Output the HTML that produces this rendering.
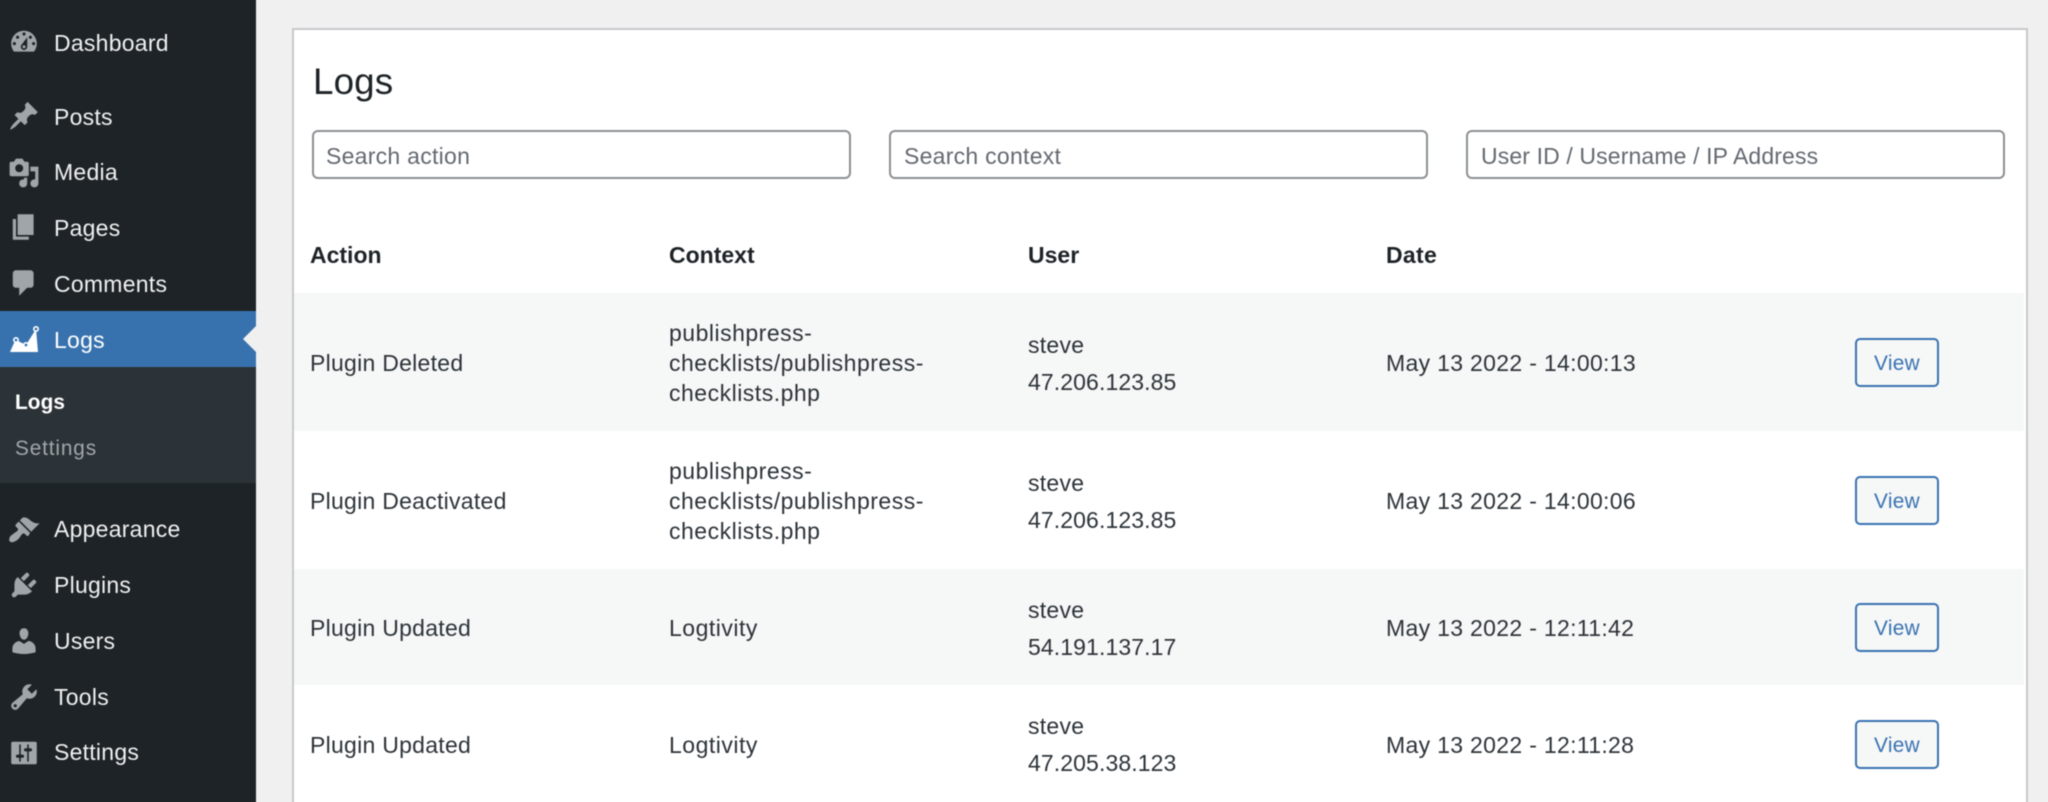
<!DOCTYPE html>
<html lang="en"><head><meta charset="utf-8"><title>Logs</title>
<style>
html,body{margin:0;padding:0;width:2048px;height:802px;overflow:hidden;background:#f0f0f1}
body{position:relative;font-family:"Liberation Sans",sans-serif;color:#2c3338;-webkit-font-smoothing:antialiased}
#w{position:absolute;left:0;top:0;width:2048px;height:802px;filter:blur(.45px)}
.a{position:absolute}
.t{position:absolute;white-space:nowrap;font-size:23px;line-height:30px;letter-spacing:.27px}
.c{letter-spacing:.5px}
.n{letter-spacing:.1px}
.d{letter-spacing:.32px}
.m{left:54px;color:#f0f0f1;letter-spacing:.25px}
.i{position:absolute;left:8px;width:32px;height:32px;fill:#a0a5aa}
.h{font-weight:700;color:#1d2327;letter-spacing:0}
.inp{position:absolute;top:130px;height:45px;box-sizing:content-box;border:2px solid #8c8f94;border-radius:6px;background:#fff}
.ph{position:absolute;top:134px;line-height:44px;font-size:23px;color:#646970;white-space:nowrap;letter-spacing:.27px}
.row{position:absolute;left:294px;width:1730px}
.btn{position:absolute;left:1855px;width:80px;height:45px;border:2px solid #3872b2;border-radius:5px;background:#f6f7f7;color:#3872b2;font-size:20.8px;line-height:47px;text-align:center;letter-spacing:.3px}
</style></head><body><div id="w">
<div class="a" style="left:-6px;top:-6px;width:262px;height:814px;background:#1d2327"></div>
<div class="a" style="left:-6px;top:311px;width:262px;height:56px;background:#3872ae"></div>
<div class="a" style="left:-6px;top:367px;width:262px;height:116px;background:#2c3338"></div>
<div class="a" style="left:243px;top:326px;width:0;height:0;border-top:13px solid transparent;border-bottom:13px solid transparent;border-right:13px solid #f0f0f1"></div>

<svg class="i" style="top:26px" viewBox="0 0 20 20"><path d="M3.76 16h12.48c1.1-1.37 1.76-3.11 1.76-5 0-4.42-3.58-8-8-8s-8 3.58-8 8c0 1.89.66 3.63 1.76 5zM10 4c.55 0 1 .45 1 1s-.45 1-1 1-1-.45-1-1 .45-1 1-1zM6 6c.55 0 1 .45 1 1s-.45 1-1 1-1-.45-1-1 .45-1 1-1zm8 0c.55 0 1 .45 1 1s-.45 1-1 1-1-.45-1-1 .45-1 1-1zm-5.37 5.55L12 7v6c0 1.1-.9 2-2 2s-2-.9-2-2c0-.57.24-1.08.63-1.45zM4 10c.55 0 1 .45 1 1s-.45 1-1 1-1-.45-1-1 .45-1 1-1zm12 0c.55 0 1 .45 1 1s-.45 1-1 1-1-.45-1-1 .45-1 1-1zm-5 3c0-.55-.45-1-1-1s-1 .45-1 1 .45 1 1 1 1-.45 1-1z" fill-rule="evenodd"/></svg>
<div class="t m" style="top:28px">Dashboard</div>
<svg class="i" style="top:100px" viewBox="0 0 20 20"><path d="M10.44 3.02l1.82-1.82 6.36 6.35-1.83 1.82c-1.05-.68-2.48-.57-3.41.36l-.75.75c-.92.93-1.04 2.35-.35 3.41l-1.83 1.82-2.41-2.41-2.8 2.79c-.42.42-3.38 2.71-3.8 2.29s1.86-3.39 2.28-3.81l2.79-2.79L4.1 9.36l1.83-1.82c1.05.69 2.48.57 3.4-.36l.75-.75c.93-.92 1.05-2.35.36-3.41z"/></svg>
<div class="t m" style="top:102px">Posts</div>
<svg class="i" style="top:157px" viewBox="0 0 20 20"><path fill-rule="evenodd" d="M13 11V4c0-.55-.45-1-1-1h-1.67L9 1H5L3.67 3H2c-.55 0-1 .45-1 1v7c0 .55.45 1 1 1h10c.55 0 1-.45 1-1zM7 4.5c1.38 0 2.5 1.12 2.5 2.5S8.38 9.5 7 9.5 4.5 8.38 4.5 7 5.62 4.5 7 4.5z"/><path d="M14 6h5v10.5c0 1.38-1.12 2.5-2.5 2.5S14 17.88 14 16.5s1.12-2.5 2.5-2.5c.17 0 .34.02.5.05V9h-3V6zm-4 8.05V13h2v3.5c0 1.38-1.12 2.5-2.5 2.5S7 17.88 7 16.5 8.12 14 9.5 14c.17 0 .34.02.5.05z"/></svg>
<div class="t m" style="top:157px">Media</div>
<svg class="i" style="top:211px" viewBox="0 0 20 20"><path d="M6 15V2h10v13H6zm-1 1h8v2H3V5h2v11z"/></svg>
<div class="t m" style="top:213px">Pages</div>
<svg class="i" style="top:267px" viewBox="0 0 20 20"><path d="M5 2h9c1.1 0 2 .9 2 2v7c0 1.1-.9 2-2 2h-2l-5 5v-5H5c-1.1 0-2-.9-2-2V4c0-1.1.9-2 2-2z"/></svg>
<div class="t m" style="top:269px">Comments</div>

<svg class="a" style="left:8px;top:323px;width:34px;height:32px" viewBox="0 0 34 32">
<path d="M2 29L6 20L8 17L18 22L28 6L30 29Z" fill="#fff"/>
<circle cx="8" cy="17" r="2.2" fill="#3872ae" stroke="#fff" stroke-width="1.6"/>
<circle cx="18" cy="22" r="2.2" fill="#3872ae" stroke="#fff" stroke-width="1.6"/>
<circle cx="28" cy="6" r="2.2" fill="#3872ae" stroke="#fff" stroke-width="1.6"/>
</svg>
<div class="t m" style="top:325px;color:#fff">Logs</div>
<div class="t" style="left:15px;top:388px;color:#fff;font-weight:700;font-size:20.8px;letter-spacing:.1px">Logs</div>
<div class="t" style="left:15px;top:434px;color:#a2a6aa;font-size:20.8px;letter-spacing:.85px">Settings</div>

<svg class="i" style="top:514px" viewBox="0 0 20 20"><path d="M14.48 11.06L7.41 3.99l1.5-1.5c.5-.56 2.3-.47 3.51.32 1.21.8 1.43 1.28 2.91 2.1 1.18.64 2.45 1.26 4.45.85zm-.71.71L6.7 4.7 4.93 6.47c-.39.39-.39 1.02 0 1.41l1.06 1.06c.39.39.39 1.03 0 1.42-.6.6-1.43 1.11-2.21 1.69-.35.26-.7.53-1.01.84C1.43 13.26 0 16 1.18 17.18c1.17 1.18 3.92-.25 5.31-1.59.31-.31.58-.66.85-1.01.58-.78 1.09-1.61 1.69-2.21.39-.39 1.02-.39 1.41 0l1.06 1.06c.39.39 1.02.39 1.41 0z"/></svg>
<div class="t m" style="top:514px">Appearance</div>
<svg class="i" style="top:569px" viewBox="0 0 20 20"><path d="M13.11 4.36L9.87 7.6 8 5.73l3.24-3.24c.35-.34 1.05-.2 1.56.32.52.51.66 1.21.31 1.55zm-8 1.77l.91-1.12 9.01 9.01-1.19.84c-.71.71-2.63 1.16-3.82 1.16H6.14L4.9 17.26c-.59.59-1.54.59-2.12 0-.59-.58-.59-1.53 0-2.12l1.24-1.24v-3.88c0-1.13.4-3.19 1.09-3.89zm7.26 3.97l3.24-3.24c.34-.35 1.04-.21 1.55.31.52.51.66 1.21.31 1.55l-3.24 3.25z"/></svg>
<div class="t m" style="top:570px">Plugins</div>
<svg class="i" style="top:625px" viewBox="0 0 20 20"><path d="M10 9.25c-2.27 0-2.73-3.44-2.73-3.44C7 4.02 7.82 2 9.97 2c2.16 0 2.98 2.02 2.71 3.81 0 0-.41 3.44-2.68 3.44zm0 2.57L12.72 10c2.39 0 4.52 2.33 4.52 4.53v2.49s-3.65 1.13-7.24 1.13c-3.65 0-7.24-1.13-7.24-1.13v-2.49c0-2.25 1.94-4.48 4.47-4.48z"/></svg>
<div class="t m" style="top:626px">Users</div>
<svg class="i" style="top:681px" viewBox="0 0 20 20"><path fill-rule="evenodd" d="M16.68 9.77c-1.34 1.34-3.3 1.67-4.95.99l-5.41 6.52c-.99.99-2.59.99-3.58 0s-.99-2.59 0-3.57l6.52-5.42c-.68-1.65-.35-3.61.99-4.95 1.28-1.28 3.12-1.62 4.72-1.06l-2.89 2.89 2.82 2.82 2.86-2.87c.53 1.58.18 3.39-1.08 4.65zM3.81 16.21c.4.39 1.04.39 1.43 0 .4-.4.4-1.04 0-1.43-.39-.4-1.03-.4-1.43 0-.39.39-.39 1.03 0 1.43z"/></svg>
<div class="t m" style="top:682px">Tools</div>
<svg class="i" style="top:737px" viewBox="0 0 20 20"><rect x="2" y="3" width="16" height="14" rx="1"/><path d="M7.5 5v10M5.5 12h4M12.5 5v10M10.5 8h4" stroke="#1d2327" stroke-width="1" fill="none" stroke-linecap="round"/><path d="M6 12h3M11 8h3" stroke="#1d2327" stroke-width="2" fill="none" stroke-linecap="round"/></svg>
<div class="t m" style="top:737px">Settings</div>

<div class="a" style="left:292px;top:28px;width:1732px;height:790px;background:#fff;border:2px solid #c8c9cc"></div>
<div class="t" style="left:313px;top:59px;font-size:36.8px;line-height:46px;color:#1d2327;letter-spacing:.1px">Logs</div>

<div class="inp" style="left:312px;width:535px"></div><div class="ph" style="left:326px">Search action</div>
<div class="inp" style="left:889px;width:535px"></div><div class="ph" style="left:904px">Search context</div>
<div class="inp" style="left:1466px;width:535px"></div><div class="ph" style="left:1481px;letter-spacing:.13px">User ID / Username / IP Address</div>

<div class="t h" style="left:310px;top:240px">Action</div>
<div class="t h" style="left:669px;top:240px">Context</div>
<div class="t h" style="left:1028px;top:240px">User</div>
<div class="t h" style="left:1386px;top:240px;letter-spacing:.3px">Date</div>

<div class="row" style="top:293px;height:138px;background:#f6f7f7"></div>
<div class="row" style="top:569px;height:116px;background:#f6f7f7"></div>

<div class="t" style="left:310px;top:348px">Plugin Deleted</div>
<div class="t c" style="left:669px;top:318px">publishpress-</div>
<div class="t c" style="left:669px;top:348px">checklists/publishpress-</div>
<div class="t c" style="left:669px;top:378px">checklists.php</div>
<div class="t" style="left:1028px;top:330px">steve</div>
<div class="t n" style="left:1028px;top:367px">47.206.123.85</div>
<div class="t d" style="left:1386px;top:348px">May 13 2022 - 14:00:13</div>
<div class="btn" style="top:338px">View</div>

<div class="t" style="left:310px;top:486px">Plugin Deactivated</div>
<div class="t c" style="left:669px;top:456px">publishpress-</div>
<div class="t c" style="left:669px;top:486px">checklists/publishpress-</div>
<div class="t c" style="left:669px;top:516px">checklists.php</div>
<div class="t" style="left:1028px;top:468px">steve</div>
<div class="t n" style="left:1028px;top:505px">47.206.123.85</div>
<div class="t d" style="left:1386px;top:486px">May 13 2022 - 14:00:06</div>
<div class="btn" style="top:476px">View</div>

<div class="t" style="left:310px;top:613px">Plugin Updated</div>
<div class="t c" style="left:669px;top:613px">Logtivity</div>
<div class="t" style="left:1028px;top:595px">steve</div>
<div class="t n" style="left:1028px;top:632px">54.191.137.17</div>
<div class="t d" style="left:1386px;top:613px">May 13 2022 - 12:11:42</div>
<div class="btn" style="top:603px">View</div>

<div class="t" style="left:310px;top:730px">Plugin Updated</div>
<div class="t c" style="left:669px;top:730px">Logtivity</div>
<div class="t" style="left:1028px;top:711px">steve</div>
<div class="t n" style="left:1028px;top:748px">47.205.38.123</div>
<div class="t d" style="left:1386px;top:730px">May 13 2022 - 12:11:28</div>
<div class="btn" style="top:720px">View</div>
</div></body></html>
